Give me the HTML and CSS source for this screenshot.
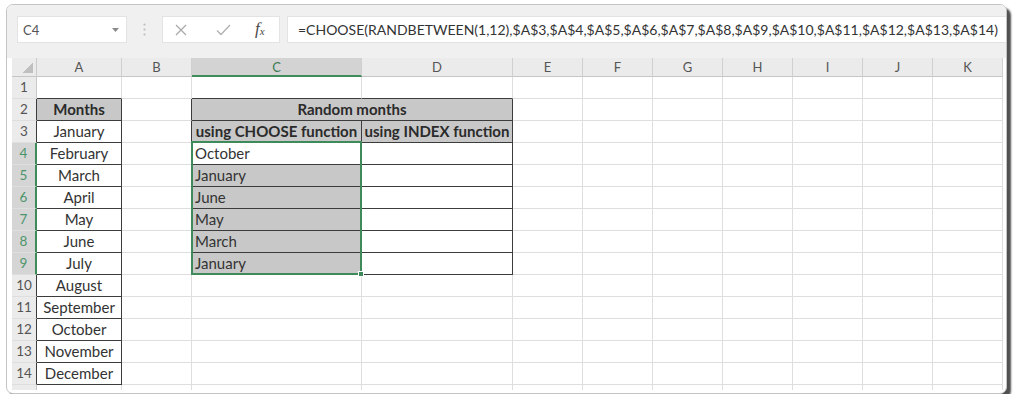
FILE: index.html
```html
<!DOCTYPE html>
<html lang="en">
<head>
    <meta charset="UTF-8">
    <title>Random months</title>
    <link rel="stylesheet" href="styles.css">
</head>
<body>

    <div class="window">
        <div class="toolbar">
            <div class="namebox">
                <span>C4</span>
                <svg width="7" height="4" viewBox="0 0 7 4"><path d="M0 0 L7 0 L3.5 4 Z" fill="#8a8a8a"/></svg>
            </div>
            <div class="grip">
                <svg width="3" height="13" viewBox="0 0 3 13"><circle cx="1.5" cy="1.5" r="1.1" fill="#bdbdbd"/><circle cx="1.5" cy="6.5" r="1.1" fill="#bdbdbd"/><circle cx="1.5" cy="11.5" r="1.1" fill="#bdbdbd"/></svg>
            </div>
            <div class="fxbox">
                <svg class="cancel" width="12" height="12" viewBox="0 0 12 12"><path d="M1 1 L11 11 M11 1 L1 11" stroke="#a8a8a8" stroke-width="1.2" fill="none"/></svg>
                <svg class="enter" width="15" height="12" viewBox="0 0 15 12"><path d="M1 6.5 L5 10.5 L14 1" stroke="#b0b0b0" stroke-width="1.3" fill="none"/></svg>
                <span class="fx">f<sub>x</sub></span>
            </div>
            <div class="formula">=CHOOSE(RANDBETWEEN(1,12),$A$3,$A$4,$A$5,$A$6,$A$7,$A$8,$A$9,$A$10,$A$11,$A$12,$A$13,$A$14)</div>
        </div>

        <div class="sheet">
            <div class="corner"></div><div class="ch">A</div><div class="ch">B</div><div class="ch on">C</div><div class="ch">D</div><div class="ch">E</div><div class="ch">F</div><div class="ch">G</div><div class="ch">H</div><div class="ch">I</div><div class="ch">J</div><div class="ch">K</div>

            <div class="rh">1</div><div class="tb"></div><div></div><div class="tb"></div><div class="tb"></div><div></div><div></div><div></div><div></div><div></div><div></div><div></div>

            <div class="rh edge">2</div><div class="t f bold mid">Months</div><div class="tr"></div><div class="t f bold mid wide">Random months</div><div></div><div></div><div></div><div></div><div></div><div></div><div></div>

            <div class="rh edge">3</div><div class="t mid">January</div><div class="tr"></div><div class="t f bold mid">using CHOOSE function</div><div class="t f bold mid">using INDEX function</div><div></div><div></div><div></div><div></div><div></div><div></div><div></div>

            <div class="rh on">4</div><div class="t mid">February</div><div class="tr"></div><div class="t active">October<div class="selection"><div class="handle"></div></div></div><div class="t"></div><div></div><div></div><div></div><div></div><div></div><div></div><div></div>

            <div class="rh on">5</div><div class="t mid">March</div><div class="tr"></div><div class="t f">January</div><div class="t"></div><div></div><div></div><div></div><div></div><div></div><div></div><div></div>

            <div class="rh on">6</div><div class="t mid">April</div><div class="tr"></div><div class="t f">June</div><div class="t"></div><div></div><div></div><div></div><div></div><div></div><div></div><div></div>

            <div class="rh on">7</div><div class="t mid">May</div><div class="tr"></div><div class="t f">May</div><div class="t"></div><div></div><div></div><div></div><div></div><div></div><div></div><div></div>

            <div class="rh on">8</div><div class="t mid">June</div><div class="tr"></div><div class="t f">March</div><div class="t"></div><div></div><div></div><div></div><div></div><div></div><div></div><div></div>

            <div class="rh on">9</div><div class="t mid">July</div><div class="tr"></div><div class="t f">January</div><div class="t"></div><div></div><div></div><div></div><div></div><div></div><div></div><div></div>

            <div class="rh edge">10</div><div class="t mid">August</div><div></div><div></div><div></div><div></div><div></div><div></div><div></div><div></div><div></div><div></div>

            <div class="rh edge">11</div><div class="t mid">September</div><div></div><div></div><div></div><div></div><div></div><div></div><div></div><div></div><div></div><div></div>

            <div class="rh edge">12</div><div class="t mid">October</div><div></div><div></div><div></div><div></div><div></div><div></div><div></div><div></div><div></div><div></div>

            <div class="rh edge">13</div><div class="t mid">November</div><div></div><div></div><div></div><div></div><div></div><div></div><div></div><div></div><div></div><div></div>

            <div class="rh edge">14</div><div class="t mid">December</div><div></div><div></div><div></div><div></div><div></div><div></div><div></div><div></div><div></div><div></div>

            <div class="rh end"></div><div class="end"></div><div class="end"></div><div class="end"></div><div class="end"></div><div class="end"></div><div class="end"></div><div class="end"></div><div class="end"></div><div class="end"></div><div class="end"></div><div class="end"></div>
        </div>
    </div>

</body>
</html>
```

FILE: styles.css
```css
* {
    box-sizing: border-box;
}

body {
    margin: 0;
    background: #fff;
    font-family: Lato, "Open Sans", sans-serif;
    color: #333;
}

.window {
    width: 1001px;
    height: 390px;
    margin: 4px 0 0 6px;
    border: 1px solid #c4c4c4;
    border-radius: 7px;
    box-shadow: 4px 4px 2px #505050;
    overflow: hidden;
    background: #fff;
}

/* formula bar */
.toolbar {
    display: flex;
    align-items: flex-start;
    height: 53px;
    padding: 11px 0 0 10px;
    background: #f0f0f0;
}

.namebox {
    display: flex;
    align-items: center;
    justify-content: space-between;
    width: 110px;
    height: 27px;
    padding: 0 7px 0 5px;
    background: #fff;
    border: 1px solid #e3e3e3;
    font-size: 13px;
    color: #555;
}

.grip {
    display: flex;
    justify-content: center;
    align-items: center;
    width: 35px;
    height: 27px;
}

.fxbox {
    display: flex;
    align-items: center;
    width: 118px;
    height: 27px;
    padding-left: 12px;
    background: #fff;
    border: 1px solid #e3e3e3;
}

.fxbox .enter {
    margin-left: 29px;
}

.fx {
    margin-left: 24px;
    font-family: "Liberation Serif", serif;
    font-style: italic;
    font-size: 17px;
    line-height: 20px;
    color: #4a4a4a;
}

.fx sub {
    font-size: 11px;
    vertical-align: -1px;
}

.formula {
    flex: 1;
    height: 27px;
    margin-left: 7px;
    padding-left: 10px;
    background: #fff;
    border: 1px solid #e3e3e3;
    border-right: 0;
    font-size: 14px;
    line-height: 25px;
    color: #333;
    white-space: nowrap;
    overflow: hidden;
}

/* grid */
.sheet {
    display: grid;
    grid-template-columns: 25px 85px 70px 170px 151px repeat(7, 70px);
    grid-template-rows: 19px repeat(14, 22px) 5px;
    margin-left: 5px;
    font-size: 15px;
}

.sheet > div {
    border-right: 1px solid #dedede;
    border-bottom: 1px solid #dedede;
    padding-left: 3px;
    line-height: 21px;
    white-space: nowrap;
    color: #333;
}

.sheet .corner {
    background: linear-gradient(135deg, transparent 50%, #bfbfbf 50%) no-repeat right 3px bottom 3px / 10px 10px, #ebebeb;
    border-right-color: #cbcbcb;
    border-bottom-color: #c6c6c6;
}

.sheet .ch {
    padding: 0;
    background: #ebebeb;
    border-right-color: #d0d0d0;
    border-bottom-color: #c6c6c6;
    text-align: center;
    font-size: 13px;
    line-height: 18px;
    color: #555;
}

.sheet .ch.on {
    background: #d3d3d3;
    border-bottom: 2px solid #3e8a5a;
    color: #3b7a52;
}

.sheet .rh {
    padding: 0;
    background: #ebebeb;
    border-right-color: #c8c8c8;
    text-align: center;
    font-size: 13.5px;
    color: #555;
}

.sheet .rh.edge {
    border-right-color: #3c3c3c;
}

.sheet .rh.on {
    background: #d5d5d5;
    border-right: 2px solid #3e8a5a;
    color: #4c946a;
}

.sheet .t {
    border-right-color: #3c3c3c;
    border-bottom-color: #3c3c3c;
}

.sheet .tb {
    border-bottom-color: #3c3c3c;
}

.sheet .tr {
    border-right-color: #3c3c3c;
}

.sheet .f {
    background: #c8c8c8;
}

.sheet .bold {
    font-weight: bold;
    color: #2b2b2b;
}

.sheet .mid {
    padding: 0;
    text-align: center;
}

.sheet .wide {
    grid-column: span 2;
}

.sheet .end {
    border-bottom: 0;
}

.active {
    position: relative;
}

.selection {
    position: absolute;
    top: -2px;
    left: -1px;
    width: 171px;
    height: 134px;
    border: 2px solid #3e8a5a;
    z-index: 1;
}

.handle {
    position: absolute;
    right: -4px;
    bottom: -4px;
    width: 6px;
    height: 6px;
    background: #3e8a5a;
    border: 1px solid #fff;
}
```
